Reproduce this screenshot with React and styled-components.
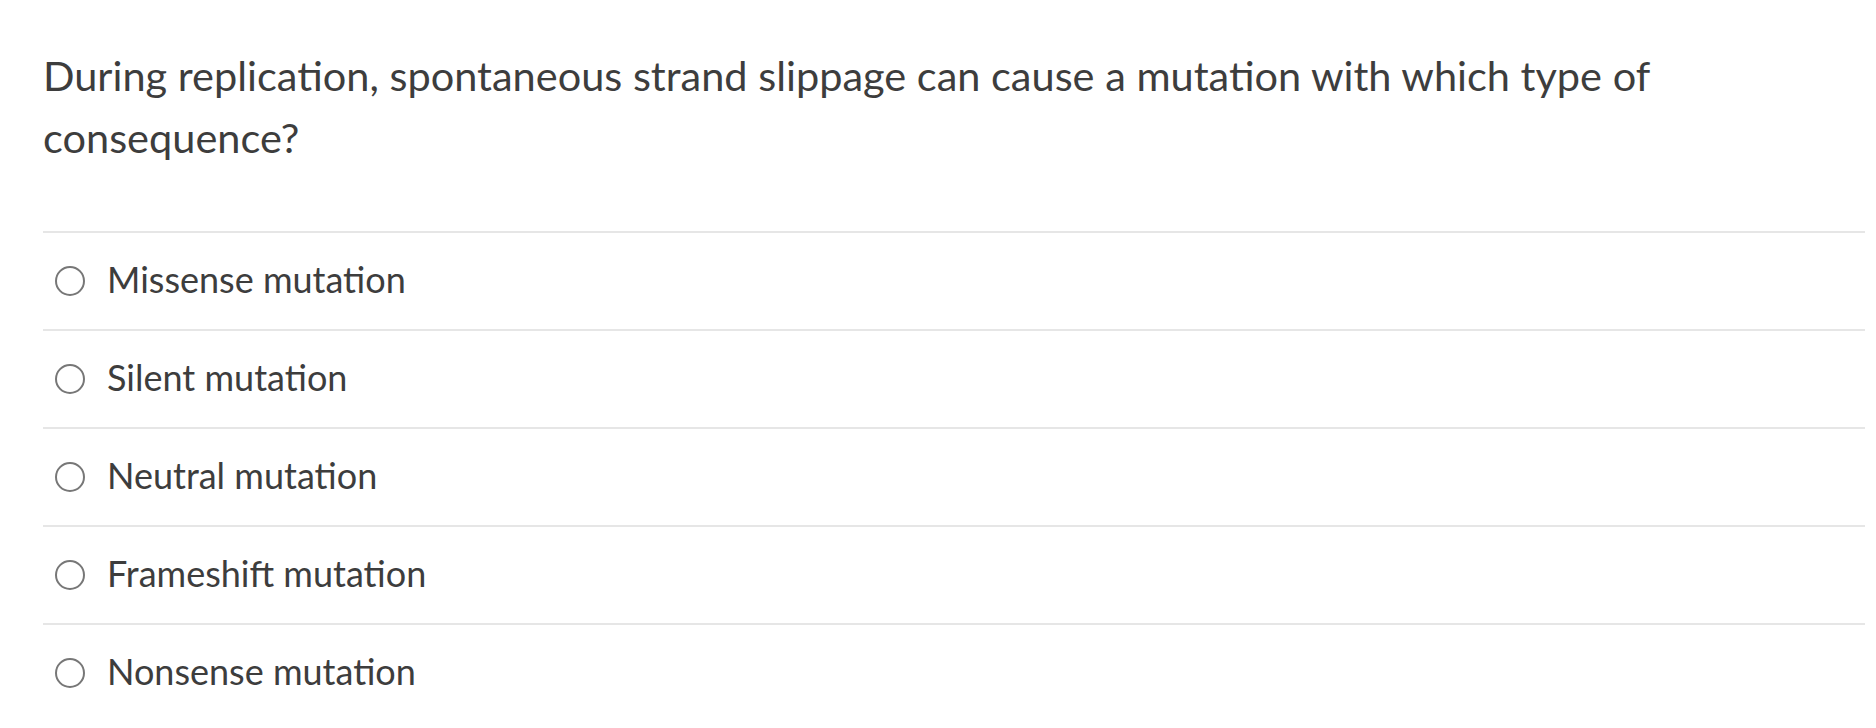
import styled, { createGlobalStyle } from 'styled-components';

const GlobalStyle = createGlobalStyle`
  html, body {
    margin: 0;
    padding: 0;
    background: #fff;
  }
  body {
    font-family: Lato, "Liberation Sans", sans-serif;
    color: #3d3d3d;
  }
`;

const answers = [
  'Missense mutation',
  'Silent mutation',
  'Neutral mutation',
  'Frameshift mutation',
  'Nonsense mutation',
];

const App = () => {
  return (
    <>
      <GlobalStyle />
      <QuestionWrap>
        <QuestionText>
          During replication, spontaneous strand slippage can cause a mutation with which type of
          consequence?
        </QuestionText>
        <AnswerList>
          {answers.map((a) => (
            <AnswerRow key={a}>
              <Radio type="radio" name="answer" />
              <AnswerLabel>{a}</AnswerLabel>
            </AnswerRow>
          ))}
        </AnswerList>
      </QuestionWrap>
    </>
  );
};

export default App;

const QuestionWrap = styled.div`
  padding: 44px 11px 0 43px;
`;

const QuestionText = styled.div`
  font-size: 41.5px;
  line-height: 62px;
  color: #3d3d3d;
  margin-bottom: 63px;
`;

const AnswerList = styled.div`
  display: flex;
  flex-direction: column;
  border-top: 2px solid #e6e6e6;
`;

const AnswerRow = styled.label`
  display: flex;
  align-items: center;
  height: 98px;
  box-sizing: border-box;
  padding: 0 0 4px 12px;
  border-bottom: 2px solid #e6e6e6;

  &:last-child {
    border-bottom-color: transparent;
  }
`;

const Radio = styled.input`
  appearance: none;
  margin: 4px 0 0 0;
  width: 30px;
  height: 30px;
  border: 2.5px solid #777;
  border-radius: 50%;
  box-sizing: border-box;
  flex-shrink: 0;
`;

const AnswerLabel = styled.span`
  margin-left: 22px;
  font-size: 36px;
  color: #3d3d3d;
`;
